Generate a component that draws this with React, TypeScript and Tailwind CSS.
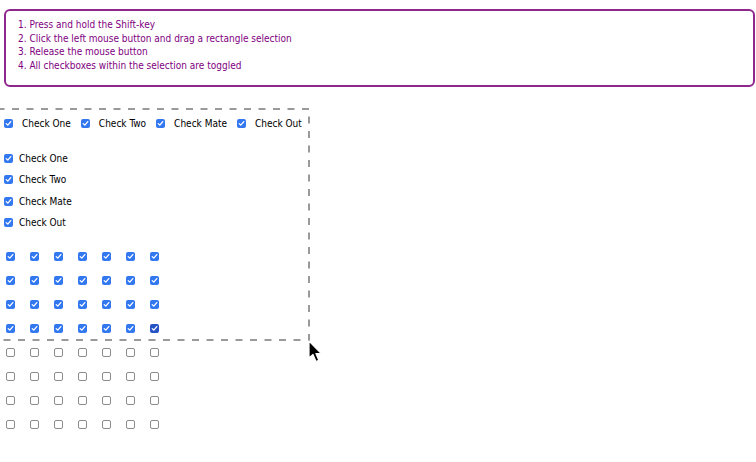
const steps = [
  "1. Press and hold the Shift-key",
  "2. Click the left mouse button and drag a rectangle selection",
  "3. Release the mouse button",
  "4. All checkboxes within the selection are toggled",
];

const labels = ["Check One", "Check Two", "Check Mate", "Check Out"];

function Box({ checked, dark }: { checked: boolean; dark?: boolean }) {
  if (!checked) {
    return <span className="block w-[9px] h-[9px] shrink-0 rounded-[2px] border-[1.5px] border-[#8c8c8c] bg-white" />;
  }
  return (
    <span
      className={
        "flex w-[9px] h-[9px] shrink-0 items-center justify-center rounded-[2px] " +
        (dark ? "bg-[#2653c4]" : "bg-[#3478f0]")
      }
    >
      <svg width="7" height="7" viewBox="0 0 7 7">
        <path d="M1.2 3.6 L2.8 5.1 L5.8 1.6" fill="none" stroke="white" strokeWidth="1.3" strokeLinecap="round" strokeLinejoin="round" />
      </svg>
    </span>
  );
}

export default function App() {
  const rows = [0, 1, 2, 3, 4, 5, 6, 7];
  const cols = [0, 1, 2, 3, 4, 5, 6];

  return (
    <div
      className="relative w-[756px] h-[462px] overflow-hidden bg-white text-[10px] text-black"
      style={{ fontFamily: '"DejaVu Sans Condensed", "Liberation Sans", Arial, sans-serif' }}
    >
      {/* Instructions */}
      <div className="mt-[9px] ml-1 w-[751px] h-[78px] rounded-md border-2 border-[#8e278e] px-3 pt-[7px] text-[#800080] leading-[13.5px]">
        {steps.map((s) => (
          <div key={s}>{s}</div>
        ))}
      </div>

      {/* Inline row */}
      <div className="mt-[28px] flex h-4 items-center pl-1">
        {labels.map((l, i) => (
          <div key={l} className={"flex items-center " + (i > 0 ? "ml-[10px]" : "")}>
            <Box checked />
            <span className="ml-[9px]">{l}</span>
          </div>
        ))}
      </div>

      {/* Stacked list */}
      <div className="mt-[19px] flex flex-col gap-[5.5px] pl-1">
        {labels.map((l) => (
          <div key={l} className="flex h-4 items-center">
            <Box checked />
            <span className="ml-[6px]">{l}</span>
          </div>
        ))}
      </div>

      {/* Grid */}
      <div className="mt-[14px] flex flex-col">
        {rows.map((r) => (
          <div key={r} className="flex h-6 items-center pl-[5.5px] gap-[15px]">
            {cols.map((c) => (
              <Box key={c} checked={r < 4} dark={r === 3 && c === 6} />
            ))}
          </div>
        ))}
      </div>

      {/* Selection rectangle */}
      <svg className="absolute left-0 top-0 pointer-events-none" width="756" height="462">
        <rect
          x="-20"
          y="109"
          width="329"
          height="231"
          fill="none"
          stroke="#9a9a9a"
          strokeWidth="2"
          strokeDasharray="7 7.5"
          strokeDashoffset="-3"
        />
      </svg>

      {/* Cursor */}
      <svg className="absolute left-[308px] top-[340px]" width="16" height="24" viewBox="0 0 16 24">
        <path
          d="M1 1 L1 18 L5 14.5 L8 21.5 L10.8 20.3 L7.9 13.5 L13 13.3 Z"
          fill="black"
          stroke="white"
          strokeWidth="1.2"
          strokeLinejoin="round"
        />
      </svg>
    </div>
  );
}
